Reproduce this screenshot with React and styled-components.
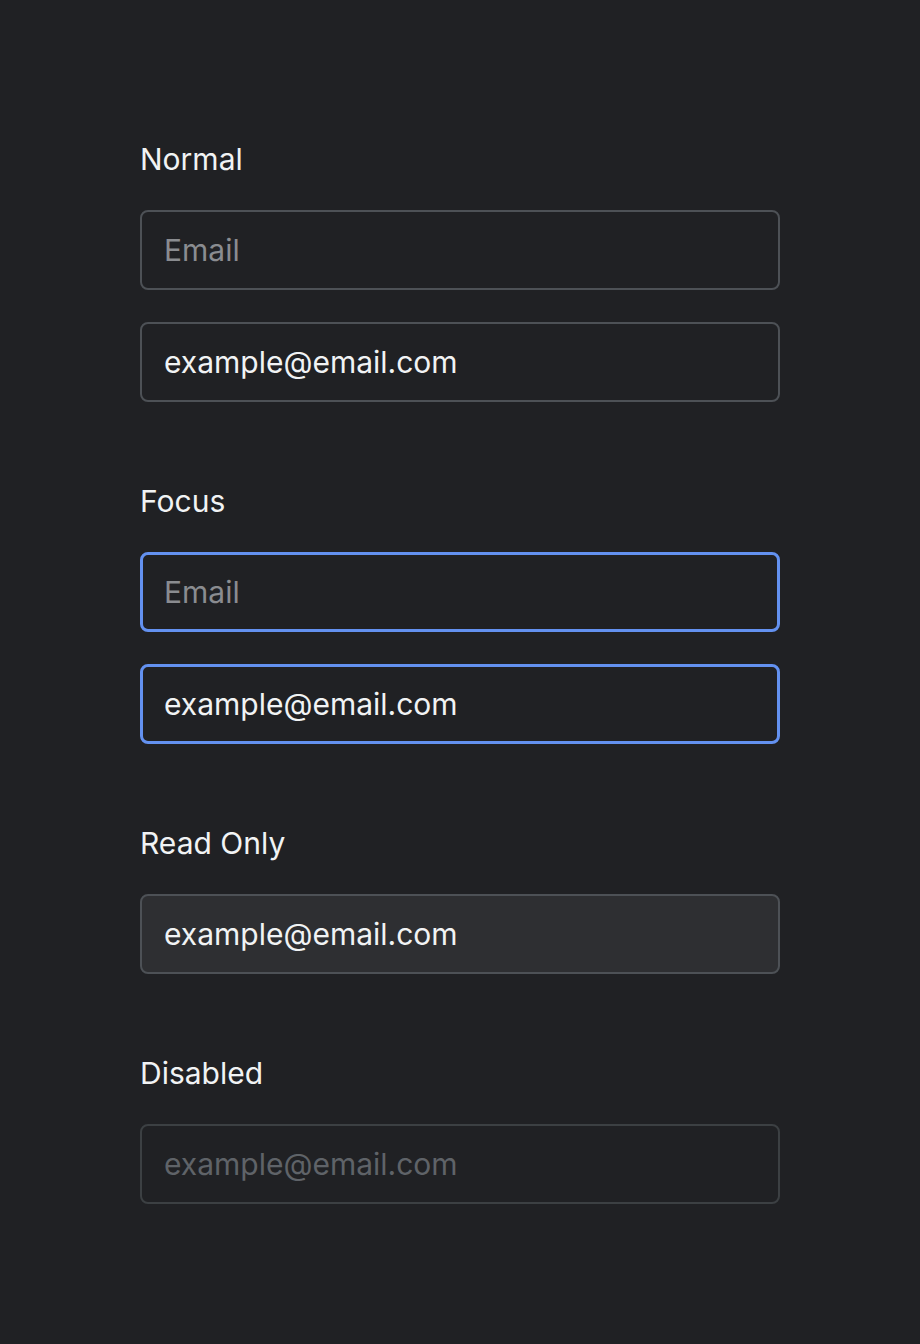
import React from "react";
import styled, { createGlobalStyle, css } from "styled-components";

const GlobalStyle = createGlobalStyle`
  html, body {
    margin: 0;
    padding: 0;
    background: #202124;
  }
  body {
    font-family: Inter, "Noto Sans", "Liberation Sans", sans-serif;
    -webkit-font-smoothing: antialiased;
  }
`;

const Page = styled.main`
  min-height: 1344px;
  box-sizing: border-box;
  padding: 141px 140px 0;
  display: flex;
  flex-direction: column;
  gap: 81px;
`;

const Section = styled.section`
  display: flex;
  flex-direction: column;
  gap: 32px;
`;

const Label = styled.label`
  display: block;
  height: 36px;
  line-height: 36px;
  margin-bottom: 1px;
  font-size: 30px;
  color: #f1f3f4;
`;

const Input = styled.input`
  box-sizing: border-box;
  width: 640px;
  height: 80px;
  margin: 0;
  padding: 0 22px;
  border: 2px solid #4d5156;
  border-radius: 8px;
  background: #202124;
  color: #f1f3f4;
  font-family: inherit;
  font-size: 30px;
  outline: none;

  &::placeholder {
    color: #8a8c90;
    opacity: 1;
  }

  ${(p) =>
    p.$focused &&
    css`
      border: 3px solid #6391f0;
      padding: 0 21px;
    `}

  &:read-only:not(:disabled) {
    ${(p) =>
      p.readOnly &&
      css`
        background: #2e2f32;
      `}
  }

  &:disabled {
    color: #5f6368;
    border-color: #3c4043;
    background: #202124;
    -webkit-text-fill-color: #5f6368;
  }
`;

const EMAIL = "example@email.com";

export default function App() {
  return (
    <>
      <GlobalStyle />
      <Page>
        <Section>
          <Label>Normal</Label>
          <Input type="email" placeholder="Email" />
          <Input type="email" defaultValue={EMAIL} />
        </Section>
        <Section>
          <Label>Focus</Label>
          <Input type="email" placeholder="Email" $focused />
          <Input type="email" defaultValue={EMAIL} $focused />
        </Section>
        <Section>
          <Label>Read Only</Label>
          <Input type="email" value={EMAIL} readOnly />
        </Section>
        <Section>
          <Label>Disabled</Label>
          <Input type="email" value={EMAIL} disabled readOnly />
        </Section>
      </Page>
    </>
  );
}
